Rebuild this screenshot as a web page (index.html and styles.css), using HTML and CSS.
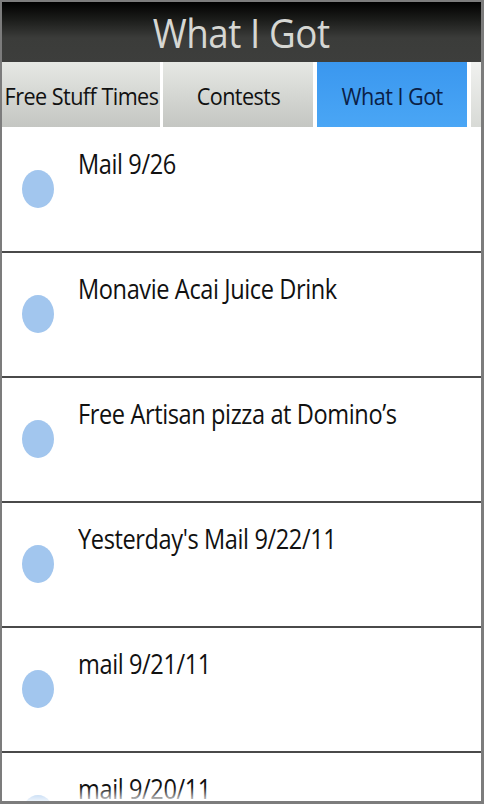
FILE: index.html
```html
<!DOCTYPE html>
<html>
<head>
<meta charset="utf-8">
<link rel="stylesheet" href="styles.css">
</head>
<body>
<div class="screen">
  <header class="titlebar"><h1 class="title">What I Got</h1></header>
  <nav class="tabs">
    <div class="tab"><span class="tab-text">Free Stuff Times</span></div>
    <div class="tab"><span class="tab-text">Contests</span></div>
    <div class="tab active"><span class="tab-text">What I Got</span></div>
    <div class="tab stub"></div>
  </nav>
  <ul class="list">
    <li class="row"><span class="dot"></span><span class="label">Mail 9/26</span></li>
    <li class="row"><span class="dot"></span><span class="label">Monavie Acai Juice Drink</span></li>
    <li class="row"><span class="dot"></span><span class="label">Free Artisan pizza at Domino’s</span></li>
    <li class="row"><span class="dot"></span><span class="label">Yesterday's Mail 9/22/11</span></li>
    <li class="row"><span class="dot"></span><span class="label">mail 9/21/11</span></li>
    <li class="row"><span class="dot"></span><span class="label">mail 9/20/11</span></li>
  </ul>
  <div class="fade"></div>
</div>
</body>
</html>
```
FILE: styles.css
```css
* { box-sizing: border-box; }
html, body { margin: 0; padding: 0; }
body { background: #7c7c7c; font-family: "Open Sans", "Noto Sans", sans-serif; }
.screen {
  position: relative;
  width: 484px;
  height: 804px;
  border: solid #7c7c7c;
  border-width: 2px 3px 3px 2px;
  background: #fff;
  overflow: hidden;
  display: flex;
  flex-direction: column;
}
.titlebar {
  height: 60px;
  flex: none;
  background: linear-gradient(#000 0%, #1c1d1b 30%, #3b3c3a 60%, #3d3e3c 100%);
  display: flex;
  align-items: center;
  justify-content: center;
}
.title {
  margin: 0;
  font-weight: normal;
  font-size: 40px;
  color: #d6d7d3;
  letter-spacing: -0.5px;
  line-height: 1;
  padding-top: 2px;
  transform: scaleX(0.92);
}
.tabs {
  height: 66px;
  flex: none;
  display: flex;
  gap: 3px;
  background: #fff;
}
.tab {
  height: 65px;
  width: 150px;
  flex: none;
  background: linear-gradient(#e6e8e4, #c4c6c2);
  display: flex;
  align-items: center;
  justify-content: center;
  color: #111;
  white-space: nowrap;
}
.tab-text {
  display: inline-block;
  font-size: 24px;
  letter-spacing: -0.6px;
  transform: scaleX(0.9);
  padding-top: 1px;
}
.tab:first-child { width: 158px; }
.tab.active {
  background: linear-gradient(#3a97ef, #4aa6f5);
  color: #0b1f47;
  width: 150px;
  margin-left: 1px;
}
.tab.stub { width: 20px; margin-left: 1px; background: linear-gradient(#f0f1ef, #d8dad6); }
.list { list-style: none; margin: 0; padding: 0; }
.row {
  position: relative;
  height: 125px;
  border-bottom: 2px solid #4a4a4a;
  display: flex;
  align-items: flex-start;
}
.dot {
  flex: none;
  width: 32px;
  height: 38px;
  border-radius: 50%;
  background: #a2c6ee;
  margin: 42px 0 0 20px;
}
.label {
  display: inline-block;
  margin: 18px 0 0 24px;
  font-size: 26.5px;
  color: #111;
  letter-spacing: -0.45px;
  white-space: nowrap;
  transform: scaleX(0.89);
  transform-origin: left center;
}
.fade {
  position: absolute;
  left: 0; right: 0; bottom: 0;
  height: 14px;
  background: linear-gradient(rgba(255,255,255,0), rgba(255,255,255,0.8));
}
```
